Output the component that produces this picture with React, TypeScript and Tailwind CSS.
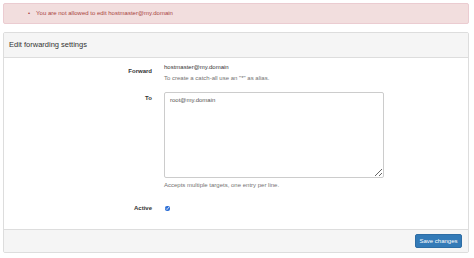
export default function App() {
  return (
    <div className="w-[474px] h-[258px] bg-white px-[3px] pt-[3px] text-[#333] font-['Liberation_Sans',Arial,sans-serif]">
      {/* Error alert */}
      <div className="h-[21px] w-[466px] bg-[#f2dede] border border-[#ebccd1] rounded-[2px] text-[#a94442] text-[6px] flex items-center">
        <ul className="pl-[24px] flex items-center gap-[6px]">
          <span className="text-[6px]">•</span>
          <li>You are not allowed to edit hostmaster@my.domain</li>
        </ul>
      </div>

      {/* Panel */}
      <div className="mt-[8px] w-[466px] border border-[#ddd] rounded-[2px] overflow-hidden">
        <div className="h-[25px] bg-[#f5f5f5] border-b border-[#ddd] px-[5px] flex items-center text-[7.5px]">
          Edit forwarding settings
        </div>

        <div className="h-[171px] bg-white pt-[5px] text-[6px]">
          <div className="grid grid-cols-[148px_1fr] gap-x-[12px]">
            <label className="text-right font-bold pt-[4px] leading-[9px]">Forward</label>
            <div>
              <div className="h-[9px] leading-[9px]">hostmaster@my.domain</div>
              <div className="mt-[2px] text-[#737373] leading-[9px]">To create a catch-all use an "*" as alias.</div>
            </div>

            <label className="text-right font-bold pt-[2px] mt-[9px] leading-[9px]">To</label>
            <div className="mt-[9px]">
              <textarea
                className="w-[220px] h-[86px] border border-[#ccc] rounded-[2px] px-[5px] py-[3px] text-[6px] text-[#555] resize-y block"
                defaultValue="root@my.domain"
              />
              <div className="mt-[3px] text-[#737373] leading-[9px]">Accepts multiple targets, one entry per line.</div>
            </div>

            <label className="text-right font-bold mt-[14px] leading-[9px]">Active</label>
            <div className="mt-[14px] flex items-center h-[9px]">
              <input type="checkbox" defaultChecked className="w-[5px] h-[5px] ml-[1px] accent-[#2d6fd6]" />
            </div>
          </div>
        </div>

        <div className="h-[23px] bg-[#f5f5f5] border-t border-[#ddd] flex items-center justify-end pr-[6px]">
          <button className="w-[47px] h-[14px] bg-[#337ab7] border border-[#2e6da4] rounded-[2px] text-white text-[6px] leading-none">
            Save changes
          </button>
        </div>
      </div>
    </div>
  );
}
